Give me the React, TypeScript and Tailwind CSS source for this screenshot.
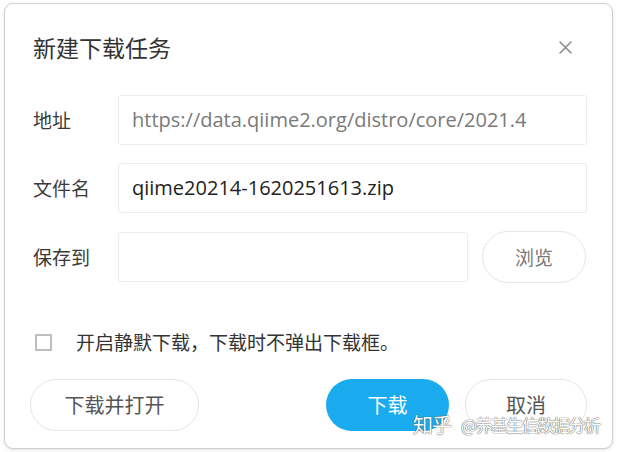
import { IoCloseOutline } from "react-icons/io5";

const cjk = "font-['Noto_Sans_CJK_SC','Microsoft_YaHei',sans-serif]";
const latin = "font-['Open_Sans','Noto_Sans_CJK_SC',sans-serif]";

const App = () => {
  return (
    <div className={`w-[617px] h-[452px] bg-white pt-[3px] pl-[4px] ${cjk}`}>
      <div className="relative w-[609px] h-[446px] bg-white border border-[#cfcfcf] rounded-[9px] shadow-[0_1px_3px_rgba(0,0,0,0.12)] pl-[28px] pr-[25px]">
        <div className="flex items-center justify-between pt-[26px] h-[60px]">
          <h1 className="text-[23px] leading-[30px] text-[#333] font-normal">新建下载任务</h1>
          <IoCloseOutline size={25} className="text-[#8a8a8a] mr-[9px]" />
        </div>

        <div className="mt-[31px] flex flex-col gap-[18px]">
          <div className="flex items-center">
            <span className="w-[85px] text-[19px] text-[#3a3a3a]">地址</span>
            <div className={`flex-1 h-[50px] border border-[#ececec] rounded-[3px] flex items-center pl-[13px] text-[20px] text-[#7a7a7a] ${latin}`}>
              https://data.qiime2.org/distro/core/2021.4
            </div>
          </div>
          <div className="flex items-center">
            <span className="w-[85px] text-[19px] text-[#3a3a3a]">文件名</span>
            <div className={`flex-1 h-[50px] border border-[#ececec] rounded-[3px] flex items-center pl-[13px] text-[20px] text-[#222] ${latin}`}>
              qiime20214-1620251613.zip
            </div>
          </div>
          <div className="flex items-center">
            <span className="w-[85px] text-[19px] text-[#3a3a3a]">保存到</span>
            <div className="w-[350px] h-[50px] border border-[#ececec] rounded-[3px]"></div>
            <button className="ml-[14px] w-[104px] h-[52px] rounded-full border border-[#e6e6e6] text-[19px] text-[#7a7a7a]">
              浏览
            </button>
          </div>
        </div>

        <div className="mt-[47px] flex items-center h-[24px]">
          <span className="ml-[2px] w-[17px] h-[17px] border-2 border-[#bdbdbd] rounded-[1px]"></span>
          <span className="ml-[24px] text-[19px] text-[#333]">开启静默下载，下载时不弹出下载框。</span>
        </div>

        <div className="mt-[25px] flex items-center">
          <button className="-ml-[3px] w-[169px] h-[52px] rounded-full border border-[#e6e6e6] text-[20px] text-[#555]">
            下载并打开
          </button>
          <button className="ml-auto w-[123px] h-[52px] rounded-full bg-[#1aabef] text-[20px] text-white">
            下载
          </button>
          <button className="ml-[16px] w-[122px] h-[52px] rounded-full border border-[#e6e6e6] text-[20px] text-[#555]">
            取消
          </button>
        </div>

        <div className="absolute left-[408px] top-[406px] flex items-center text-white [text-shadow:0_0_1px_#555,0_0_1px_#555]">
          <span className="text-[20px] tracking-[-1px]">知乎</span>
          <span className="ml-[10px] text-[17px] tracking-[-1.5px]">@养基生信数据分析</span>
        </div>
      </div>
    </div>
  );
};

export default App;
